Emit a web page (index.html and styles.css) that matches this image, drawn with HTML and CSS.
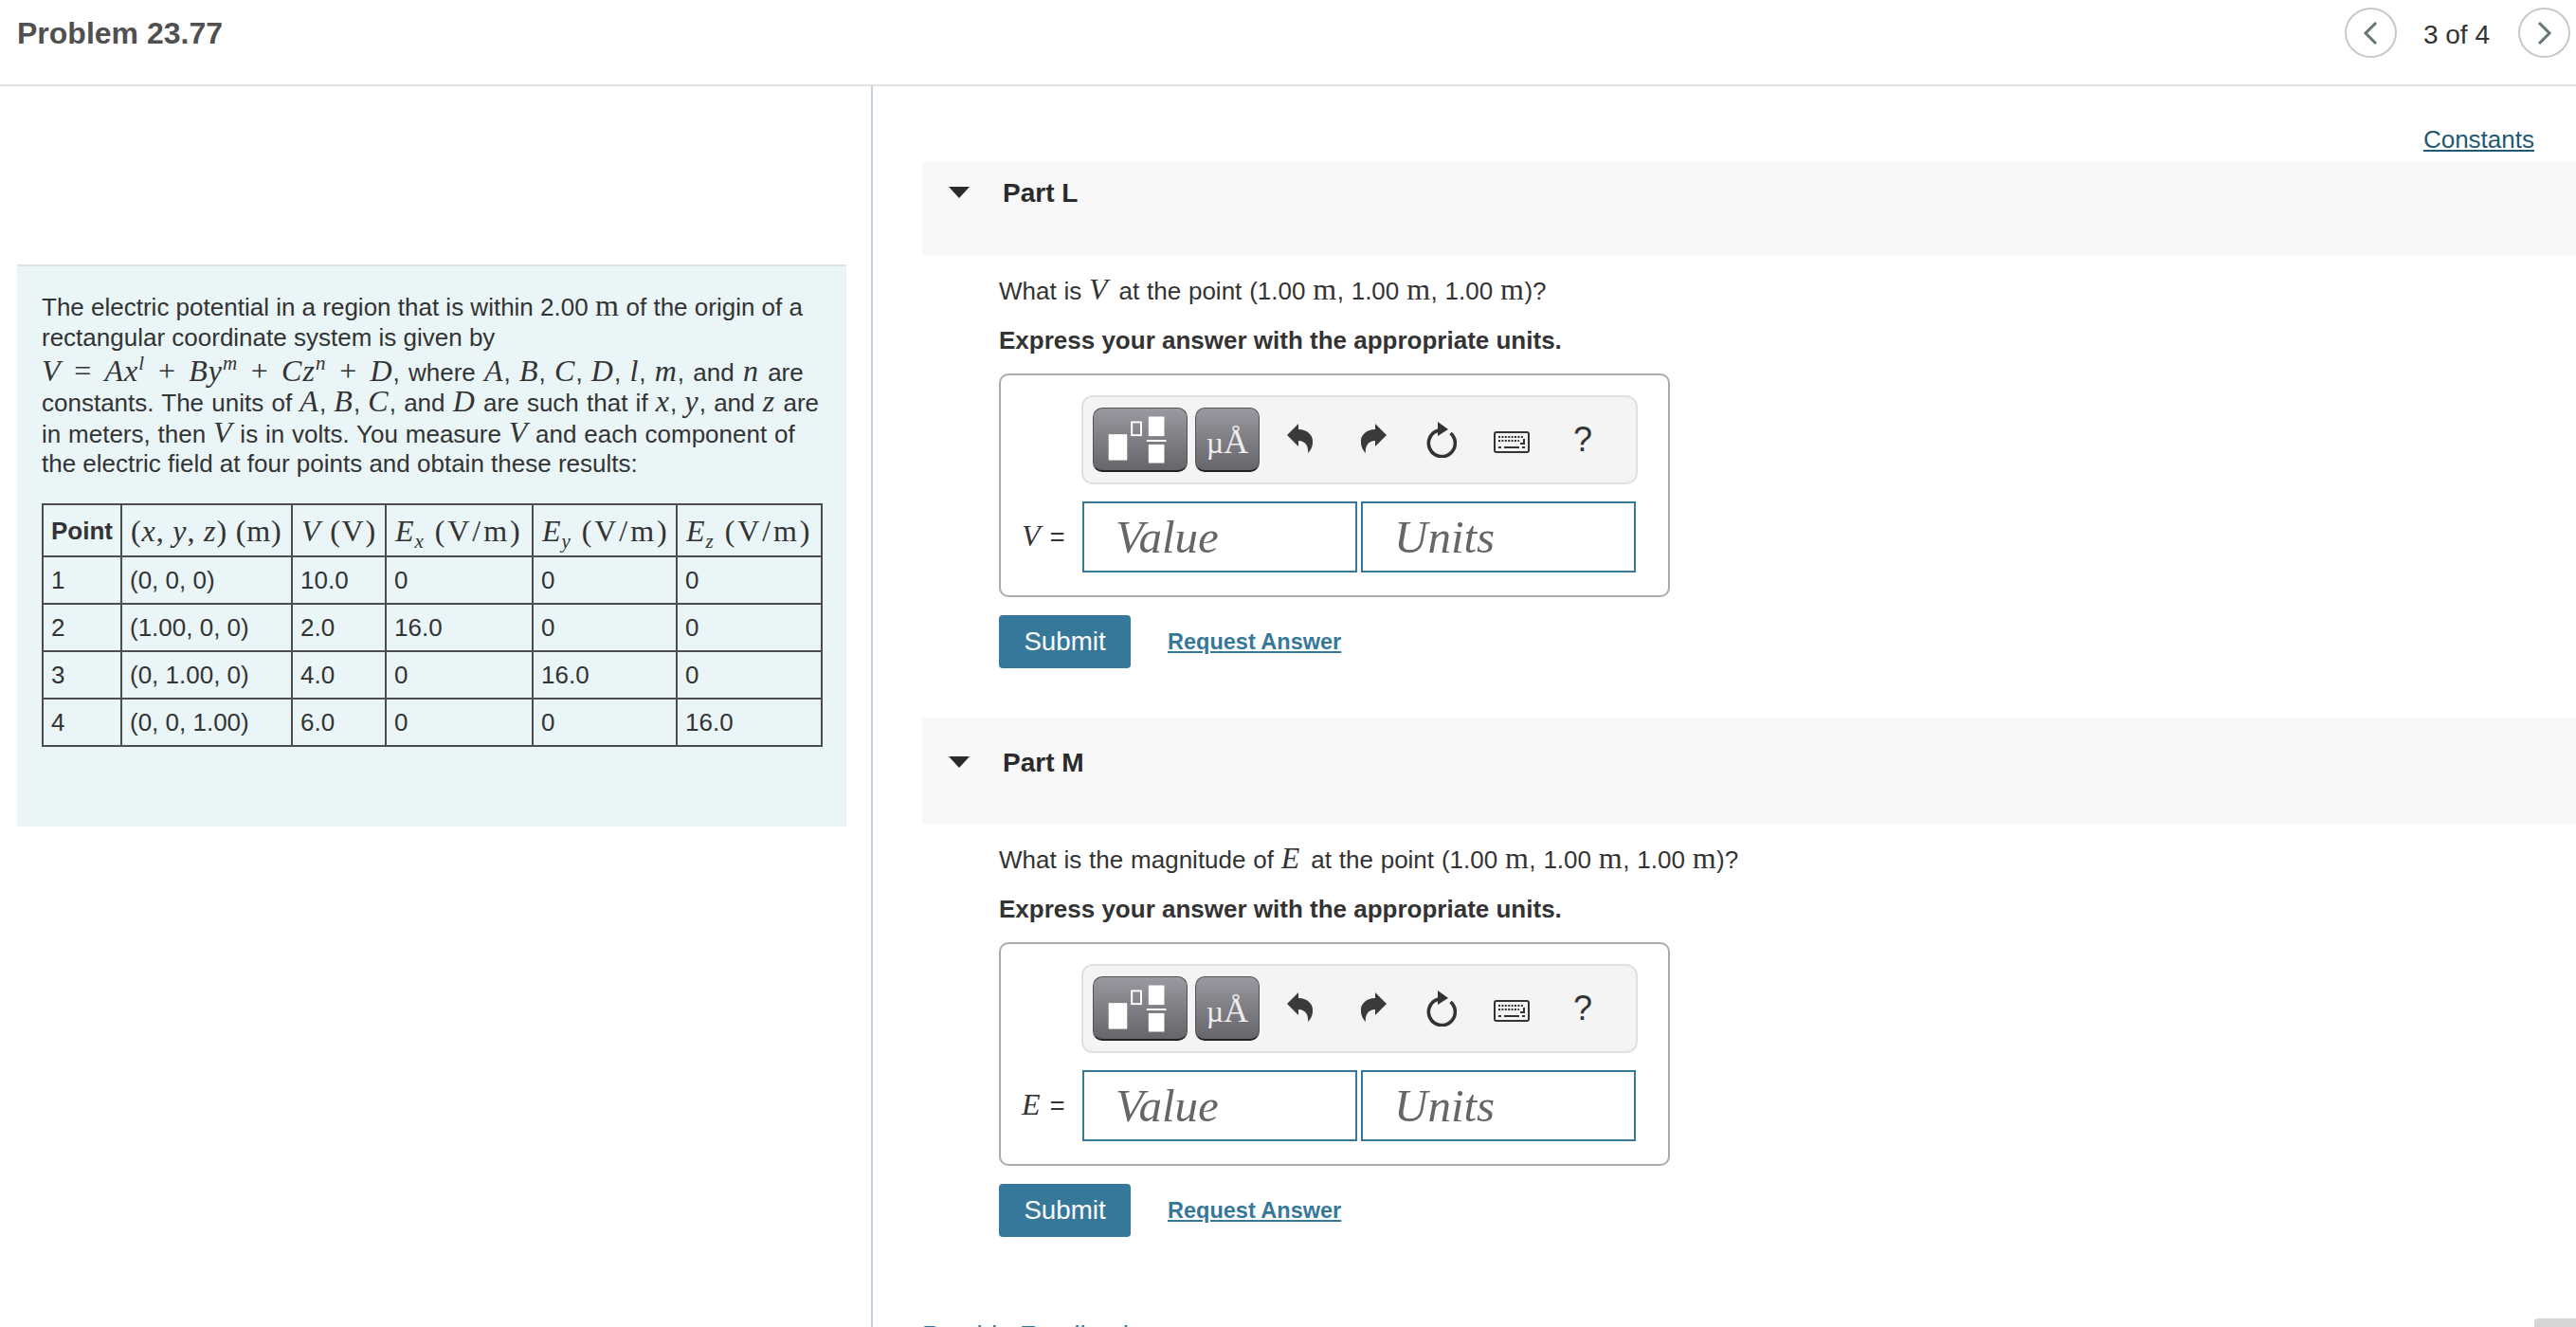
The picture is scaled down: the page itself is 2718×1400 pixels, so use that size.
FILE: index.html
```html
<!DOCTYPE html>
<html lang="en">
<head>
  <meta charset="UTF-8">
  <title>Problem 23.77</title>
  <link rel="stylesheet" href="styles.css">
</head>
<body>
  <!-- Top bar -->
  <header class="top-bar">
    <h1 class="problem-title">Problem 23.77</h1>
    <nav class="pager">
      <button class="pager-btn">
        <svg width="16" height="26" viewBox="0 0 16 26"><path d="M14 2 L3 13 L14 24" fill="none" stroke="#667676" stroke-width="3"/></svg>
      </button>
      <span class="pager-count">3 of 4</span>
      <button class="pager-btn">
        <svg width="16" height="26" viewBox="0 0 16 26"><path d="M2 2 L13 13 L2 24" fill="none" stroke="#667676" stroke-width="3"/></svg>
      </button>
    </nav>
  </header>

  <main class="columns">
    <!-- Problem statement -->
    <section class="left-col">
      <div class="intro-panel">
        <div class="line">The electric potential in a region that is within 2.00 <span class="mr">m</span> of the origin of a</div>
        <div class="line">rectangular coordinate system is given by</div>
        <div class="line line-tall"><span class="formula"><span class="mi">V</span> <span class="mr">=</span> <span class="mi">Ax<sup>l</sup></span> <span class="mr">+</span> <span class="mi">By<sup>m</sup></span> <span class="mr">+</span> <span class="mi">Cz<sup>n</sup></span> <span class="mr">+</span> <span class="mi">D</span></span>, where <span class="mi">A</span>, <span class="mi">B</span>, <span class="mi">C</span>, <span class="mi">D</span>, <span class="mi">l</span>, <span class="mi">m</span>, and <span class="mi">n</span> are</div>
        <div class="line line-units">constants. The units of <span class="mi">A</span>, <span class="mi">B</span>, <span class="mi">C</span>, and <span class="mi">D</span> are such that if <span class="mi">x</span>, <span class="mi">y</span>, and <span class="mi">z</span> are</div>
        <div class="line line-meters">in meters, then <span class="mi">V</span> is in volts. You measure <span class="mi">V</span> and each component of</div>
        <div class="line">the electric field at four points and obtain these results:</div>

        <table class="data-table">
          <colgroup>
            <col class="col-point"><col class="col-pos"><col class="col-v"><col class="col-ex"><col class="col-ey"><col class="col-ez">
          </colgroup>
          <tr class="head-row">
            <th>Point</th>
            <th class="math-head">(<span class="mi">x</span>, <span class="mi">y</span>, <span class="mi">z</span>) (m)</th>
            <th class="math-head math-wide"><span class="mi">V</span> (V)</th>
            <th class="math-head math-field"><span class="mi">E<sub>x</sub></span> (V/m)</th>
            <th class="math-head math-field"><span class="mi">E<sub>y</sub></span> (V/m)</th>
            <th class="math-head math-field"><span class="mi">E<sub>z</sub></span> (V/m)</th>
          </tr>
          <tr><td>1</td><td>(0, 0, 0)</td><td>10.0</td><td>0</td><td>0</td><td>0</td></tr>
          <tr><td>2</td><td>(1.00, 0, 0)</td><td>2.0</td><td>16.0</td><td>0</td><td>0</td></tr>
          <tr><td>3</td><td>(0, 1.00, 0)</td><td>4.0</td><td>0</td><td>16.0</td><td>0</td></tr>
          <tr><td>4</td><td>(0, 0, 1.00)</td><td>6.0</td><td>0</td><td>0</td><td>16.0</td></tr>
        </table>
      </div>
    </section>

    <!-- Question parts -->
    <section class="right-col">
      <div class="constants-row"><a class="constants-link" href="#">Constants</a></div>

      <!-- Part L -->
      <div class="part-bar">
        <span class="part-arrow"></span>
        <span class="part-title">Part L</span>
      </div>
      <div class="part-body">
        <p class="question">What is <span class="mi q-var">V</span> at the point (1.00 <span class="mr">m</span>, 1.00 <span class="mr">m</span>, 1.00 <span class="mr">m</span>)?</p>
        <p class="express">Express your answer with the appropriate units.</p>
        <div class="answer-box">
          <div class="toolbar">
            <button class="tool-btn tool-template">
              <svg width="100" height="68" viewBox="0 0 100 68">
                <rect x="16" y="27" width="20" height="28" fill="#fff"/>
                <rect x="41" y="14" width="10" height="14" fill="none" stroke="#fff" stroke-width="2"/>
                <rect x="59" y="8" width="17" height="21" fill="#fff"/>
                <rect x="57" y="33" width="21" height="2" fill="#fff"/>
                <rect x="59" y="38" width="17" height="20" fill="#fff"/>
              </svg>
            </button>
            <button class="tool-btn tool-units"><span class="unit-mu">µ</span>Å</button>
            <svg class="icon-undo" width="28" height="32" viewBox="0 0 28 32"><path d="M0 12 L12 0 V6 C22 6 28 13 27 20 C27 25 24 29 22 31 C23 25 20 18 12 18 V24 Z" fill="#3a3a3a"/></svg>
            <svg class="icon-redo" width="28" height="32" viewBox="0 0 28 32"><path d="M0 12 L12 0 V6 C22 6 28 13 27 20 C27 25 24 29 22 31 C23 25 20 18 12 18 V24 Z" fill="#3a3a3a"/></svg>
            <svg class="icon-reset" width="34" height="38" viewBox="0 0 34 38"><path d="M27.5 12 A14 14 0 1 1 15 9" fill="none" stroke="#333" stroke-width="3.6"/><path d="M14 0 L25 8 L14 15 Z" fill="#333"/></svg>
            <svg class="icon-keyboard" width="38" height="23" viewBox="0 0 38 23">
              <rect x="1" y="1" width="36" height="21" rx="2" fill="#f4f4f4" stroke="#333" stroke-width="2"/>
              <path d="M5 6 H32 M5 10 H27" stroke="#333" stroke-width="2" stroke-dasharray="2 1.4" fill="none"/>
              <path d="M32 8 V13 H28" stroke="#333" stroke-width="2" fill="none"/>
              <path d="M5 17 H8 M11 17 H27 M30 17 H33" stroke="#333" stroke-width="2" fill="none"/>
            </svg>
            <span class="tool-help">?</span>
          </div>
          <div class="input-row">
            <label class="input-label"><span class="mi">V</span> <span class="label-eq">=</span></label>
            <input class="answer-input" type="text" placeholder="Value">
            <input class="answer-input" type="text" placeholder="Units">
          </div>
        </div>
        <div class="action-row">
          <button class="submit-btn">Submit</button>
          <a class="request-link" href="#">Request Answer</a>
        </div>
      </div>

      <!-- Part M -->
      <div class="part-bar part-bar-tall">
        <span class="part-arrow"></span>
        <span class="part-title">Part M</span>
      </div>
      <div class="part-body">
        <p class="question">What is the magnitude of <span class="mi q-var">E</span> at the point (1.00 <span class="mr">m</span>, 1.00 <span class="mr">m</span>, 1.00 <span class="mr">m</span>)?</p>
        <p class="express">Express your answer with the appropriate units.</p>
        <div class="answer-box">
          <div class="toolbar">
            <button class="tool-btn tool-template">
              <svg width="100" height="68" viewBox="0 0 100 68">
                <rect x="16" y="27" width="20" height="28" fill="#fff"/>
                <rect x="41" y="14" width="10" height="14" fill="none" stroke="#fff" stroke-width="2"/>
                <rect x="59" y="8" width="17" height="21" fill="#fff"/>
                <rect x="57" y="33" width="21" height="2" fill="#fff"/>
                <rect x="59" y="38" width="17" height="20" fill="#fff"/>
              </svg>
            </button>
            <button class="tool-btn tool-units"><span class="unit-mu">µ</span>Å</button>
            <svg class="icon-undo" width="28" height="32" viewBox="0 0 28 32"><path d="M0 12 L12 0 V6 C22 6 28 13 27 20 C27 25 24 29 22 31 C23 25 20 18 12 18 V24 Z" fill="#3a3a3a"/></svg>
            <svg class="icon-redo" width="28" height="32" viewBox="0 0 28 32"><path d="M0 12 L12 0 V6 C22 6 28 13 27 20 C27 25 24 29 22 31 C23 25 20 18 12 18 V24 Z" fill="#3a3a3a"/></svg>
            <svg class="icon-reset" width="34" height="38" viewBox="0 0 34 38"><path d="M27.5 12 A14 14 0 1 1 15 9" fill="none" stroke="#333" stroke-width="3.6"/><path d="M14 0 L25 8 L14 15 Z" fill="#333"/></svg>
            <svg class="icon-keyboard" width="38" height="23" viewBox="0 0 38 23">
              <rect x="1" y="1" width="36" height="21" rx="2" fill="#f4f4f4" stroke="#333" stroke-width="2"/>
              <path d="M5 6 H32 M5 10 H27" stroke="#333" stroke-width="2" stroke-dasharray="2 1.4" fill="none"/>
              <path d="M32 8 V13 H28" stroke="#333" stroke-width="2" fill="none"/>
              <path d="M5 17 H8 M11 17 H27 M30 17 H33" stroke="#333" stroke-width="2" fill="none"/>
            </svg>
            <span class="tool-help">?</span>
          </div>
          <div class="input-row">
            <label class="input-label"><span class="mi">E</span> <span class="label-eq">=</span></label>
            <input class="answer-input" type="text" placeholder="Value">
            <input class="answer-input" type="text" placeholder="Units">
          </div>
        </div>
        <div class="action-row">
          <button class="submit-btn">Submit</button>
          <a class="request-link" href="#">Request Answer</a>
        </div>
      </div>

      <a class="feedback-link" href="#">Provide Feedback</a>
    </section>
  </main>

  <div class="corner-tab"></div>
</body>
</html>
```

FILE: styles.css
```css
html, body {
  margin: 0;
  padding: 0;
  height: 1400px;
  overflow: hidden;
  background-color: #fff;
  color: #333;
  font-family: "Liberation Sans", Arial, sans-serif;
  font-size: 26px;
  line-height: 32px;
}

/* Top bar */
.top-bar {
  display: flex;
  justify-content: space-between;
  align-items: flex-start;
  height: 89px;
  border-bottom: 2px solid #e0e0e0;
}

.problem-title {
  margin: 0;
  padding: 17px 0 0 18px;
  font-size: 32px;
  line-height: 36px;
  font-weight: 700;
  color: #505050;
}

.pager {
  display: flex;
  align-items: center;
  padding: 8px 6px 0 0;
}

.pager-btn {
  display: flex;
  justify-content: center;
  align-items: center;
  width: 55px;
  height: 53px;
  padding: 0;
  background-color: #fff;
  border: 2px solid #c8c8c8;
  border-radius: 50%;
}

.pager-count {
  margin: 4px 30px 0 28px;
  font-size: 28px;
  color: #333;
}

/* Two columns */
.columns {
  display: flex;
  height: 1309px;
}

.left-col {
  flex: none;
  width: 921px;
  padding-top: 188px;
  box-sizing: border-box;
  border-right: 2px solid #c2d2e2;
}

.intro-panel {
  width: 875px;
  margin-left: 18px;
  padding: 27px 20px 84px 26px;
  box-sizing: border-box;
  background-color: #e9f5f7;
  border-top: 2px solid #dde3e4;
}

.line {
  white-space: nowrap;
}

.line-tall {
  margin-top: 5px;
  word-spacing: 2px;
}

.line-units {
  word-spacing: 1px;
}

.line-meters {
  margin-top: 1px;
  margin-bottom: -1px;
  word-spacing: 0.6px;
}

/* Math text */
.mi {
  font-family: "Liberation Serif", "DejaVu Serif", serif;
  font-style: italic;
  font-size: 32px;
  line-height: 0;
  letter-spacing: 1px;
}

.mr {
  font-family: "Liberation Serif", "DejaVu Serif", serif;
  font-size: 32px;
  line-height: 0;
  letter-spacing: 0.5px;
}

.mi sup, .mi sub {
  font-size: 21px;
  line-height: 0;
}

.formula {
  word-spacing: 6.5px;
}

.q-var {
  margin-right: 3px;
}

/* Data table */
.data-table {
  width: 822px;
  margin: 26px 0 0 0;
  table-layout: fixed;
  border-collapse: collapse;
  font-size: 26px;
}

.col-point { width: 83px; }
.col-pos { width: 180px; }
.col-v { width: 99px; }
.col-ex { width: 155px; }
.col-ey { width: 152px; }
.col-ez { width: 153px; }

.data-table th, .data-table td {
  height: 50px;
  padding: 0 0 0 8px;
  box-sizing: border-box;
  border: 2px solid #4d4d4d;
  text-align: left;
  white-space: nowrap;
}

.head-row th {
  height: 55px;
}

.data-table .math-head {
  padding-left: 9px;
  font-family: "Liberation Serif", "DejaVu Serif", serif;
  font-weight: 400;
  font-size: 32px;
  letter-spacing: 0.8px;
}

.data-table .math-wide {
  letter-spacing: 1.7px;
}

.data-table .math-field {
  letter-spacing: 2.9px;
}

/* Right column */
.right-col {
  flex: 1;
  min-width: 0;
  padding-left: 52px;
}

.constants-row {
  height: 80px;
  padding: 41px 44px 0 0;
  box-sizing: border-box;
  text-align: right;
  line-height: 30px;
}

.constants-link {
  font-size: 26px;
  color: #1f5a70;
}

.part-bar {
  display: flex;
  align-items: flex-start;
  height: 99px;
  padding: 17px 0 0 28px;
  box-sizing: border-box;
  background-color: #f8f8f8;
}

.part-bar-tall {
  height: 113px;
  padding-top: 32px;
}

.part-arrow {
  width: 0;
  height: 0;
  margin: 9px 35px 0 0;
  border-left: 11px solid transparent;
  border-right: 11px solid transparent;
  border-top: 12px solid #2a2a2a;
}

.part-title {
  font-size: 28px;
  font-weight: 700;
  color: #2a2a2a;
}

.part-body {
  padding-left: 81px;
}

.question {
  margin: 0;
  padding-top: 21px;
  word-spacing: 0.6px;
}

.express {
  margin: 20px 0 0;
  font-weight: 700;
}

/* Answer box */
.answer-box {
  width: 708px;
  height: 236px;
  margin-top: 19px;
  padding-top: 21px;
  box-sizing: border-box;
  border: 2px solid #aaa;
  border-radius: 10px;
}

.toolbar {
  display: flex;
  align-items: center;
  width: 587px;
  height: 94px;
  margin-left: 85px;
  padding-left: 10px;
  box-sizing: border-box;
  background-color: #f4f4f4;
  border: 2px solid #e0e0e0;
  border-radius: 12px;
}

.tool-btn {
  height: 68px;
  padding: 0;
  background: linear-gradient(#9a98a0, #65656a);
  border: 1px solid #555;
  border-bottom: 2px solid #222;
  border-radius: 10px;
  color: #eee;
}

.tool-template {
  display: flex;
  width: 100px;
  overflow: hidden;
  margin-right: 8px;
}

.tool-units {
  width: 68px;
  padding-top: 4px;
  font-family: "Liberation Serif", serif;
  font-size: 36px;
}

.unit-mu {
  font-size: 32px;
}

.icon-undo { margin: -3px 0 0 29px; }
.icon-redo { margin: -3px 0 0 49px; transform: scaleX(-1); }
.icon-reset { margin: 0 0 0 40px; }
.icon-keyboard { margin: 4px 0 0 39px; }

.tool-help {
  margin-left: 46px;
  font-size: 36px;
  color: #333;
}

.input-row {
  display: flex;
  align-items: center;
  margin-top: 18px;
}

.input-label {
  width: 86px;
  padding-left: 22px;
  box-sizing: border-box;
  white-space: nowrap;
}

.label-eq {
  margin-left: 2px;
  font-size: 27px;
}

.answer-input {
  width: 290px;
  height: 75px;
  margin-right: 4px;
  padding: 0 0 0 33px;
  box-sizing: border-box;
  border: 2px solid #36789a;
  border-radius: 0;
  outline: none;
  font-family: "Liberation Serif", serif;
  font-style: italic;
  font-size: 49px;
}

.answer-input::placeholder {
  color: #666;
  opacity: 1;
}

/* Submit row */
.action-row {
  display: flex;
  align-items: center;
  margin: 19px 0 52px;
}

.submit-btn {
  width: 139px;
  height: 56px;
  padding: 0;
  background-color: #36789a;
  border: none;
  border-radius: 4px;
  color: #fff;
  font-family: "Liberation Sans", Arial, sans-serif;
  font-size: 27.7px;
}

.request-link {
  margin-left: 39px;
  font-size: 23.5px;
  font-weight: 700;
  color: #36789a;
}

.feedback-link {
  display: block;
  margin: 88px 0 0 0;
  color: #36789a;
  font-size: 28px;
  text-decoration: none;
}

.corner-tab {
  position: absolute;
  right: 0;
  bottom: 0;
  width: 44px;
  height: 9px;
  background-color: #d5d5d5;
  border-top-left-radius: 4px;
}
```
